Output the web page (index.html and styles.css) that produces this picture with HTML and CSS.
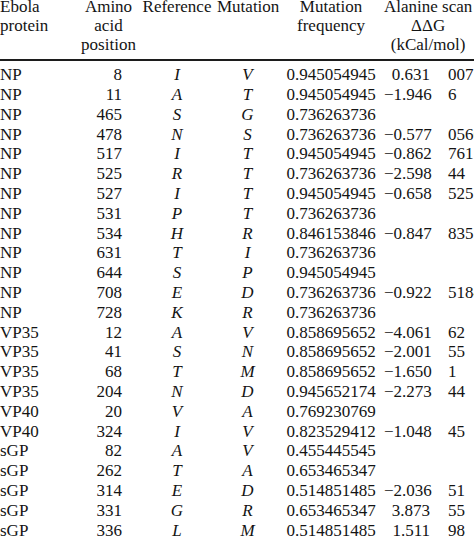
FILE: index.html
```html
<!DOCTYPE html>
<html lang="en">
<head>
<meta charset="utf-8">
<title>Ebola protein mutations</title>
<link rel="stylesheet" href="styles.css">
</head>
<body>
<div class="wrap">
<table class="tbl">
<colgroup>
<col class="w1"><col class="w2"><col class="w3"><col class="w4"><col class="w5"><col class="w6"><col class="w7">
</colgroup>
<thead>
<tr>
<th class="h1">Ebola<br>protein</th>
<th class="hc">Amino<br>acid<br>position</th>
<th class="hc">Reference</th>
<th class="hc">Mutation</th>
<th class="hc">Mutation<br>frequency</th>
<th class="hal" colspan="2"><span class="stack">Alanine scan<br>ΔΔG<br>(kCal/mol)</span></th>
</tr>
</thead>
<tbody>
<tr><td>NP</td><td class="num">8</td><td class="aa">I</td><td class="aa">V</td><td class="fr">0.945054945</td><td class="dg">0.631</td><td class="ex">007</td></tr>
<tr><td>NP</td><td class="num">11</td><td class="aa">A</td><td class="aa">T</td><td class="fr">0.945054945</td><td class="dg">−1.946</td><td class="ex">6</td></tr>
<tr><td>NP</td><td class="num">465</td><td class="aa">S</td><td class="aa">G</td><td class="fr">0.736263736</td><td class="dg"></td><td class="ex"></td></tr>
<tr><td>NP</td><td class="num">478</td><td class="aa">N</td><td class="aa">S</td><td class="fr">0.736263736</td><td class="dg">−0.577</td><td class="ex">0566</td></tr>
<tr><td>NP</td><td class="num">517</td><td class="aa">I</td><td class="aa">T</td><td class="fr">0.945054945</td><td class="dg">−0.862</td><td class="ex">761</td></tr>
<tr><td>NP</td><td class="num">525</td><td class="aa">R</td><td class="aa">T</td><td class="fr">0.736263736</td><td class="dg">−2.598</td><td class="ex">44</td></tr>
<tr><td>NP</td><td class="num">527</td><td class="aa">I</td><td class="aa">T</td><td class="fr">0.945054945</td><td class="dg">−0.658</td><td class="ex">5257</td></tr>
<tr><td>NP</td><td class="num">531</td><td class="aa">P</td><td class="aa">T</td><td class="fr">0.736263736</td><td class="dg"></td><td class="ex"></td></tr>
<tr><td>NP</td><td class="num">534</td><td class="aa">H</td><td class="aa">R</td><td class="fr">0.846153846</td><td class="dg">−0.847</td><td class="ex">8357</td></tr>
<tr><td>NP</td><td class="num">631</td><td class="aa">T</td><td class="aa">I</td><td class="fr">0.736263736</td><td class="dg"></td><td class="ex"></td></tr>
<tr><td>NP</td><td class="num">644</td><td class="aa">S</td><td class="aa">P</td><td class="fr">0.945054945</td><td class="dg"></td><td class="ex"></td></tr>
<tr><td>NP</td><td class="num">708</td><td class="aa">E</td><td class="aa">D</td><td class="fr">0.736263736</td><td class="dg">−0.922</td><td class="ex">5184</td></tr>
<tr><td>NP</td><td class="num">728</td><td class="aa">K</td><td class="aa">R</td><td class="fr">0.736263736</td><td class="dg"></td><td class="ex"></td></tr>
<tr><td>VP35</td><td class="num">12</td><td class="aa">A</td><td class="aa">V</td><td class="fr">0.858695652</td><td class="dg">−4.061</td><td class="ex">62</td></tr>
<tr><td>VP35</td><td class="num">41</td><td class="aa">S</td><td class="aa">N</td><td class="fr">0.858695652</td><td class="dg">−2.001</td><td class="ex">55</td></tr>
<tr><td>VP35</td><td class="num">68</td><td class="aa">T</td><td class="aa">M</td><td class="fr">0.858695652</td><td class="dg">−1.650</td><td class="ex">1</td></tr>
<tr><td>VP35</td><td class="num">204</td><td class="aa">N</td><td class="aa">D</td><td class="fr">0.945652174</td><td class="dg">−2.273</td><td class="ex">44</td></tr>
<tr><td>VP40</td><td class="num">20</td><td class="aa">V</td><td class="aa">A</td><td class="fr">0.769230769</td><td class="dg"></td><td class="ex"></td></tr>
<tr><td>VP40</td><td class="num">324</td><td class="aa">I</td><td class="aa">V</td><td class="fr">0.823529412</td><td class="dg">−1.048</td><td class="ex">45</td></tr>
<tr><td>sGP</td><td class="num">82</td><td class="aa">A</td><td class="aa">V</td><td class="fr">0.455445545</td><td class="dg"></td><td class="ex"></td></tr>
<tr><td>sGP</td><td class="num">262</td><td class="aa">T</td><td class="aa">A</td><td class="fr">0.653465347</td><td class="dg"></td><td class="ex"></td></tr>
<tr><td>sGP</td><td class="num">314</td><td class="aa">E</td><td class="aa">D</td><td class="fr">0.514851485</td><td class="dg">−2.036</td><td class="ex">51</td></tr>
<tr><td>sGP</td><td class="num">331</td><td class="aa">G</td><td class="aa">R</td><td class="fr">0.653465347</td><td class="dg">3.873</td><td class="ex">55</td></tr>
<tr><td>sGP</td><td class="num">336</td><td class="aa">L</td><td class="aa">M</td><td class="fr">0.514851485</td><td class="dg">1.511</td><td class="ex">98</td></tr>
</tbody>
</table>
</div>
</body>
</html>
```
FILE: styles.css
```css
html, body {
  margin: 0;
  padding: 0;
  background: #ffffff;
  overflow: hidden;
}
body {
  width: 474px;
  height: 537px;
  font-family: "Liberation Serif", "Times New Roman", serif;
  font-size: 17px;
  color: #141414;
}
.wrap {
  margin-top: -3.3px;
  width: 474px;
  overflow: hidden;
}
.tbl {
  border-collapse: collapse;
  table-layout: fixed;
  width: 508px;
}
.w1 { width: 80px; }
.w2 { width: 57px; }
.w3 { width: 80px; }
.w4 { width: 61px; }
.w5 { width: 106px; }
.w6 { width: 64px; }
.w7 { width: 60px; }
.tbl th {
  font-weight: normal;
  vertical-align: top;
  line-height: 19px;
  padding: 0 0 5.3px 0;
  white-space: nowrap;
  border-bottom: 2px solid #1c1c1c;
}
.tbl .h1 { text-align: left; }
.tbl .hc { text-align: center; }
.tbl .hal { text-align: left; }
.stack {
  display: inline-block;
  text-align: center;
}
.tbl td {
  padding: 0;
  line-height: 19.8px;
  white-space: nowrap;
  text-align: left;
}
.tbl tbody tr:first-child td {
  padding-top: 4.3px;
}
.tbl td.num {
  text-align: right;
  padding-right: 15px;
}
.tbl td.aa {
  text-align: center;
  font-style: italic;
}
.tbl td.fr {
  padding-left: 8.5px;
}
.tbl td.dg {
  text-align: right;
  padding-right: 18px;
}
.tbl td.ex {
  text-align: left;
}
```
